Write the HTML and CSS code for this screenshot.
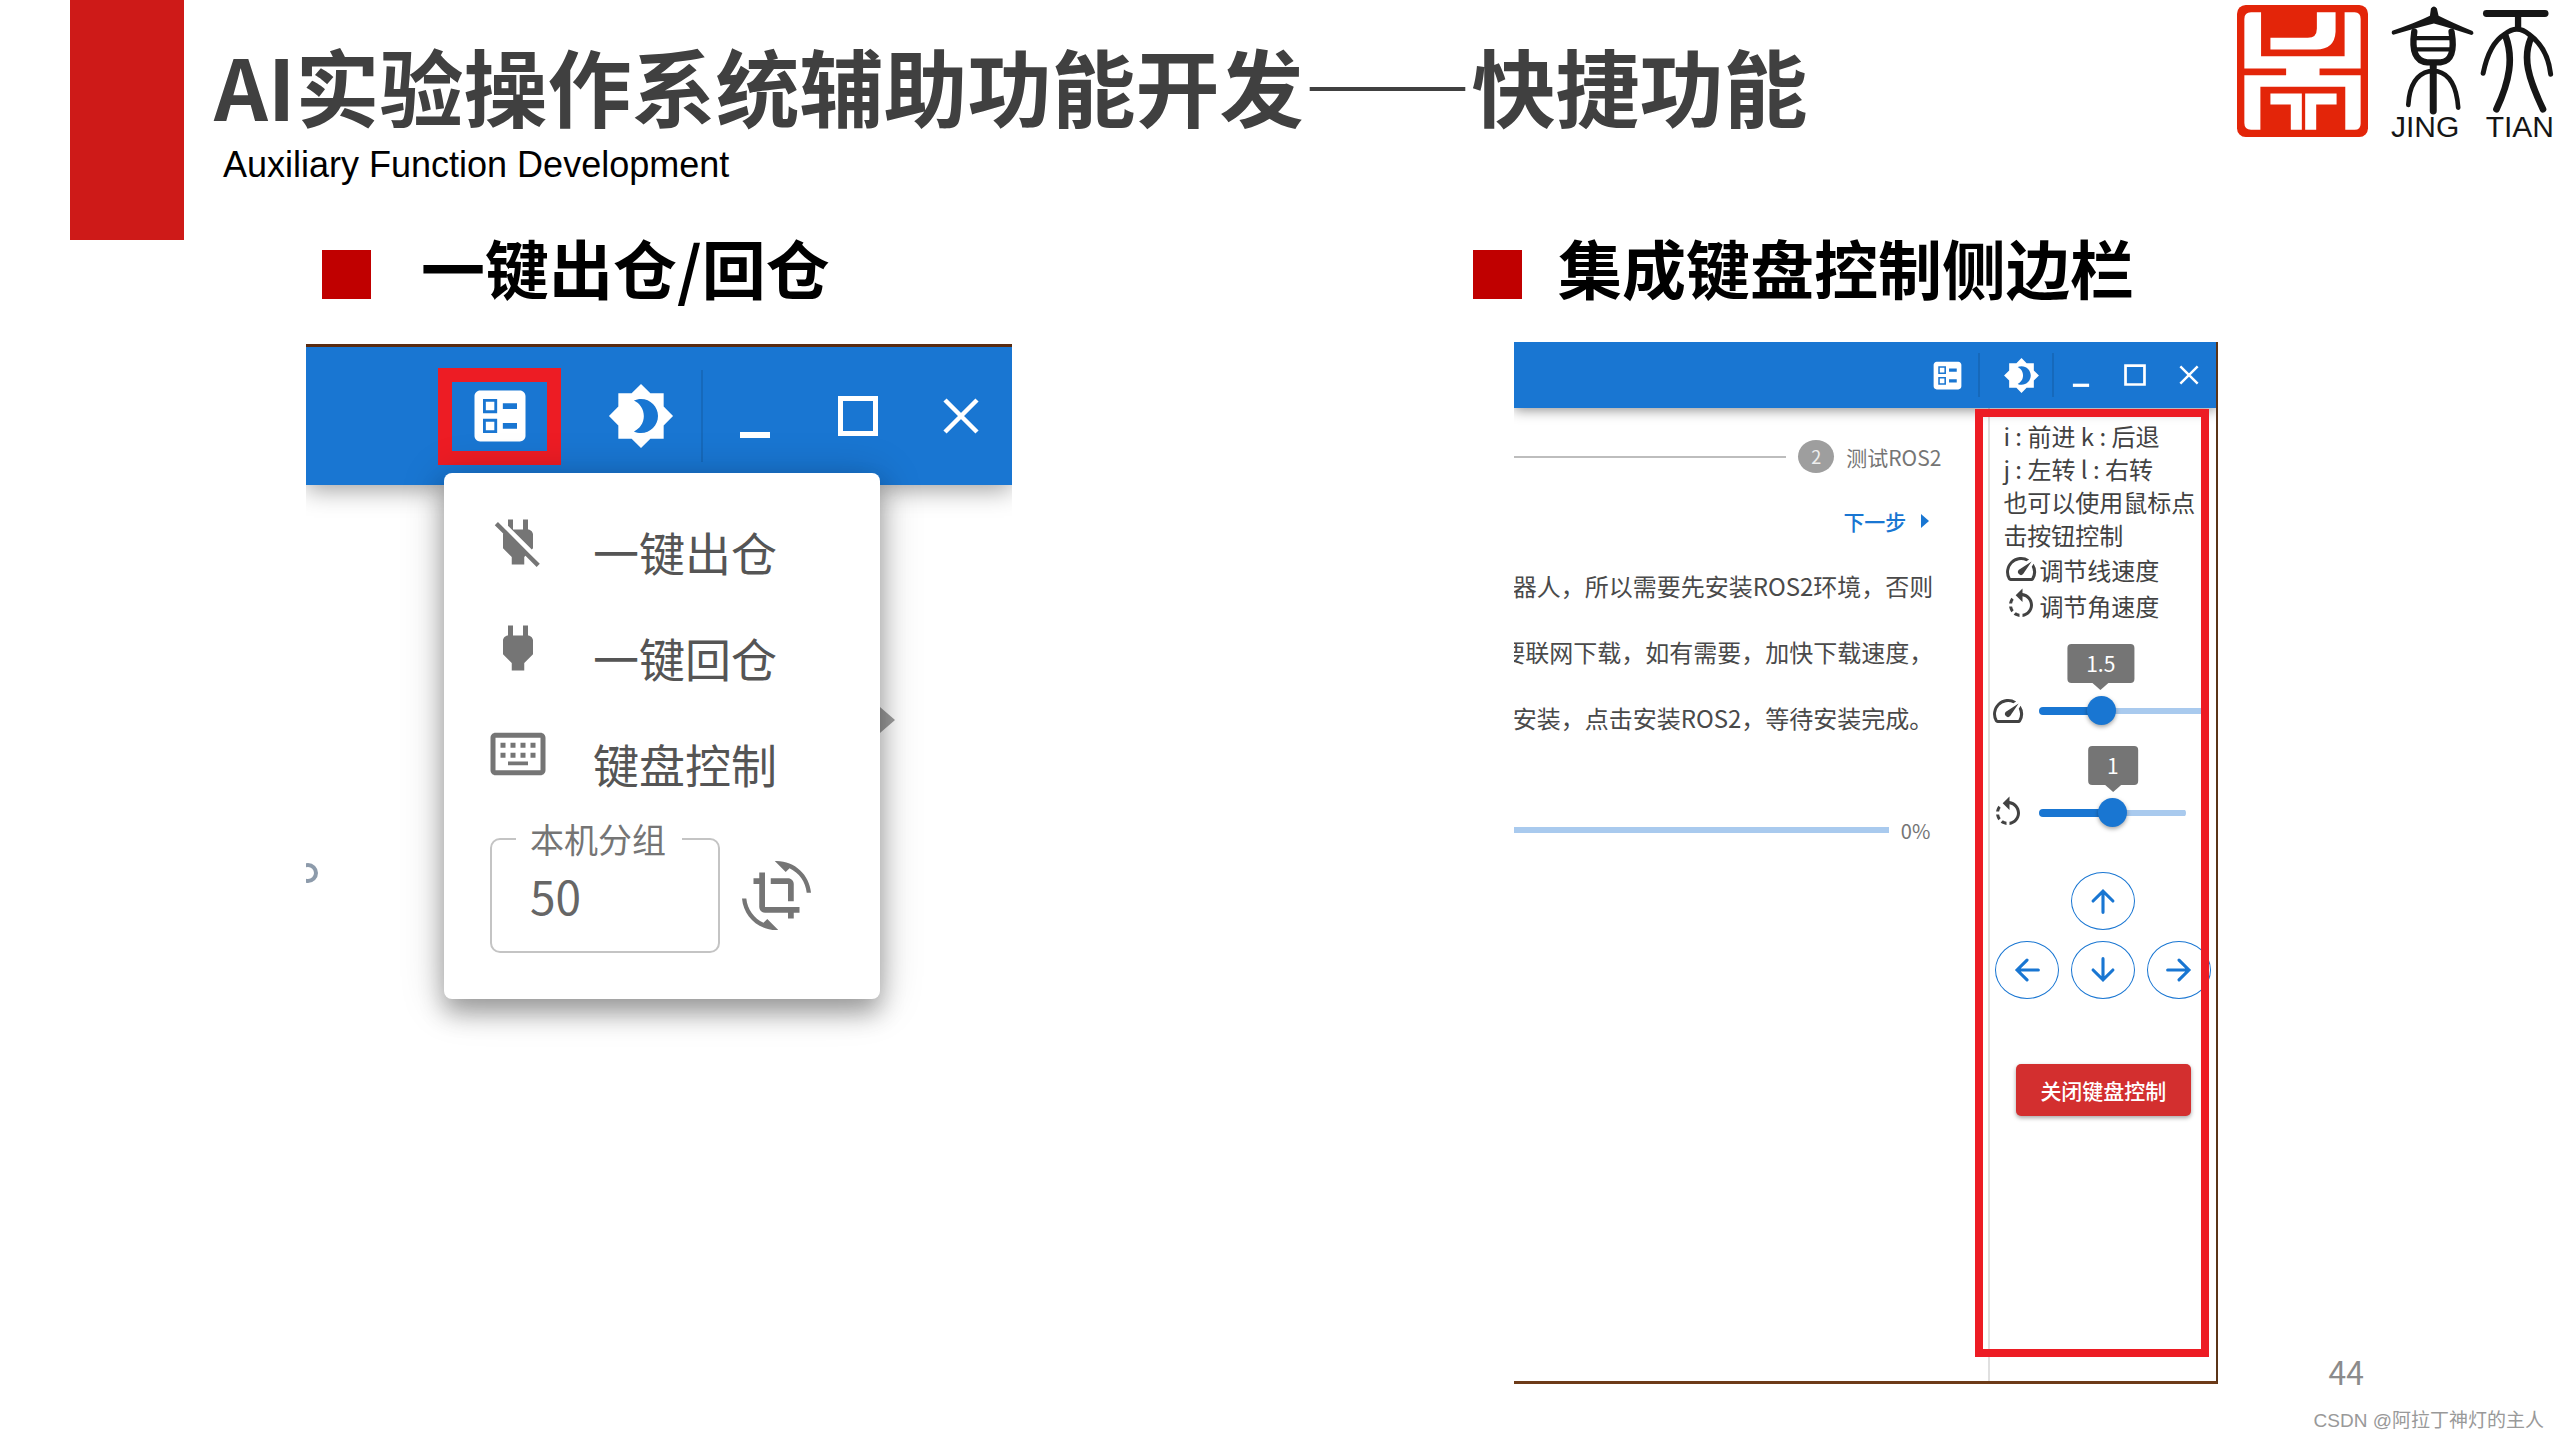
FILE: index.html
```html
<!DOCTYPE html>
<html lang="zh-CN">
<head>
<meta charset="UTF-8">
<title>AI实验操作系统辅助功能开发——快捷功能</title>
<meta name="viewport" content="width=device-width, initial-scale=1.0">
<link rel="stylesheet" href="styles.css">
</head>
<body>

<!-- icon sprite -->
<svg class="sprite" aria-hidden="true">
<symbol id="i-ballot" viewBox="0 0 24 24"><path fill-rule="evenodd" d="M13 9.5h5v-2h-5v2zm0 7h5v-2h-5v2zm6 4.5H5c-1.1 0-2-.9-2-2V5c0-1.1.9-2 2-2h14c1.1 0 2 .9 2 2v14c0 1.1-.9 2-2 2zM6 11h5V6H6v5zm1-4h3v3H7V7zM6 18h5v-5H6v5zm1-4h3v3H7v-3z"/></symbol>
<symbol id="i-theme" viewBox="0 0 24 24"><path d="M20 8.69V4h-4.69L12 .69 8.69 4H4v4.69L.69 12 4 15.31V20h4.69L12 23.31 15.31 20H20v-4.69L23.31 12 20 8.69zM12 18c-.89 0-1.74-.2-2.5-.55C11.56 16.5 13 14.42 13 12s-1.44-4.5-3.5-5.45C10.26 6.2 11.11 6 12 6c3.31 0 6 2.69 6 6s-2.69 6-6 6z"/></symbol>
<symbol id="i-min" viewBox="0 0 48 48"><path d="M9 40h30v6H9z"/></symbol>
<symbol id="i-max" viewBox="0 0 48 48"><path fill-rule="evenodd" d="M4 4h40v40H4zM9 9v30h30V9z"/></symbol>
<symbol id="i-close" viewBox="0 0 48 48"><path d="M8 8l32 32M40 8L8 40" fill="none" stroke="currentColor" stroke-width="4.5"/></symbol>
<symbol id="i-plug" viewBox="0 0 24 24"><path d="M16.01 7L16 3h-2v4h-4V3H8v4h-.01C7 6.99 6 7.99 6 8.99v5.49L9.5 18v3h5v-3l3.5-3.51v-5.5c0-1-1-2-1.99-1.99z"/></symbol>
<symbol id="i-plug-off" viewBox="0 0 24 24"><path d="M18 14.49V9c0-1-1.01-2.01-2-2V3h-2v4h-4V3H8v2.48l9.51 9.5.49-.49zm-1.76 1.77L7.2 7.2l-.01.01L3.98 4 2.71 5.25l3.36 3.36C6.04 8.74 6 8.87 6 9v5.48L9.5 18v3h5v-3l.48-.48L19.45 22l1.26-1.28-4.47-4.46z"/></symbol>
<symbol id="i-keyboard" viewBox="0 0 24 24"><path fill-rule="evenodd" d="M21 3.5H3c-1.1 0-2 .9-2 2v13c0 1.1.9 2 2 2h18c1.1 0 2-.9 2-2v-13c0-1.1-.9-2-2-2zm0 15H3v-13h18v13z"/><path d="M5 7.5h2v2H5zm4 0h2v2H9zm4 0h2v2h-2zm4 0h2v2h-2zM5 11.5h2v2H5zm4 0h2v2H9zm4 0h2v2h-2zm4 0h2v2h-2zM8 15h8v1.5H8z"/></symbol>
<symbol id="i-crop-rotate" viewBox="0 0 24 24"><path d="M7.47 21.49C4.2 19.94 1.86 16.76 1.5 13H0c.51 6.16 5.66 11 11.95 11 .23 0 .44-.02.66-.03L8.8 20.15l-1.33 1.34zM12.05 0c-.23 0-.44.02-.66.04l3.81 3.81 1.33-1.33C19.8 4.07 22.14 7.24 22.5 11H24c-.51-6.16-5.66-11-11.95-11zM16 14h2V8c0-1.11-.9-2-2-2h-6v2h6v6zm-8 2V4H6v2H4v2h2v8c0 1.1.89 2 2 2h8v2h2v-2h2v-2H8z"/></symbol>
<symbol id="i-speed" viewBox="0 0 24 24"><path d="M20.38 8.57l-1.23 1.85a8 8 0 0 1-.22 7.58H5.07A8 8 0 0 1 15.58 6.85l1.85-1.23A10 10 0 0 0 3.35 19a2 2 0 0 0 1.72 1h13.85a2 2 0 0 0 1.74-1 10 10 0 0 0-.27-10.44zM10.59 15.41a2 2 0 0 0 2.83 0l5.66-8.49-8.49 5.66a2 2 0 0 0 0 2.83z"/></symbol>
<symbol id="i-rotate" viewBox="0 0 24 24"><path d="M7.11 8.53L5.7 7.11C4.8 8.27 4.24 9.61 4.07 11h2.02c.14-.87.49-1.72 1.02-2.47zM6.09 13H4.07c.17 1.39.72 2.73 1.62 3.89l1.41-1.42c-.52-.75-.87-1.59-1.01-2.47zm1.01 5.32c1.16.9 2.51 1.44 3.9 1.61V17.9c-.87-.15-1.71-.49-2.46-1.03L7.1 18.32zM13 4.07V1L8.45 5.55 13 10V6.09c2.84.48 5 2.94 5 5.91s-2.16 5.43-5 5.91v2.02c3.95-.49 7-3.85 7-7.93s-3.05-7.44-7-7.93z"/></symbol>
<symbol id="i-arrow" viewBox="0 0 24 24"><path d="M12 20V5.5M5 12l7-7 7 7" fill="none" stroke="currentColor" stroke-width="2.2" stroke-linecap="round"/></symbol>
</svg>

<header class="slide-header">
<div class="accent"></div>
<div class="titles">
<h1>AI实验操作系统辅助功能开发——快捷功能</h1>
<p>Auxiliary Function Development</p>
</div>
<div class="logo">
<svg class="logo-mark" viewBox="113 15 392 395" aria-hidden="true">
<rect x="113" y="15" width="392" height="395" rx="26" fill="#e32509"/>
<g fill="#fff">
<path d="M155 37H185V168H435V37H465Q483 37 483 57V205H360V225H483V370Q483 388 465 388H437V260H183V388H155Q135 388 135 368V225H260V205H135V57Q135 37 155 37Z"/>
<path d="M352 37H408V95Q405 148 350 148H213V113H325Q352 113 352 85Z"/>
<path d="M213 280H307V388H274V313H213ZM317 280H411V313H350V388H317Z"/>
</g>
</svg>
<div class="logo-name">
<svg viewBox="573 12 490 330" aria-hidden="true">
<path fill="#161616" d="M577 89Q650 64 690 44L693 22Q702 10 711 22L716 44Q760 66 818 90Q825 100 815 102Q750 80 702 67Q650 80 580 101Q572 98 577 89Z"/>
<g fill="none" stroke="#161616" stroke-linecap="round">
<path stroke-width="19" d="M643 92Q630 180 682 184H722Q770 180 755 92"/>
<path stroke-width="13" d="M645 111H755M645 145H755"/>
<path stroke-width="21" d="M700 188V330"/>
<path stroke-width="14" d="M625 312Q630 224 688 211H712Q768 224 775 320"/>
<path stroke-width="21" d="M860 37H1036"/>
<path stroke-width="19" d="M955 42V76"/>
<path stroke-width="15" d="M850 217Q868 128 914 100Q952 68 988 100Q1044 140 1053 220"/>
<path stroke-width="20" d="M917 104C942 170 930 240 890 325M994 110C968 170 985 230 1030 325"/>
</g>
</svg>
<div class="logo-text"><span>JING</span> <span>TIAN</span></div>
</div>
</div>
</header>

<main class="columns">

<section class="column">
<h2>一键出仓/回仓</h2>
<div class="shot shot-menu">
<nav class="bar bar-lg">
<button class="marked" aria-label="快捷功能"><svg><use href="#i-ballot"/></svg></button>
<button class="theme" aria-label="主题"><svg><use href="#i-theme"/></svg></button>
<span class="rule"></span>
<button class="win" aria-label="最小化"><svg><use href="#i-min"/></svg></button>
<button class="win" aria-label="最大化"><svg><use href="#i-max"/></svg></button>
<button class="win" aria-label="关闭"><svg><use href="#i-close"/></svg></button>
</nav>
<span class="dot"></span>
<span class="more"></span>
<div class="menu">
<button class="menu-item"><svg><use href="#i-plug-off"/></svg>一键出仓</button>
<button class="menu-item"><svg><use href="#i-plug"/></svg>一键回仓</button>
<button class="menu-item"><svg><use href="#i-keyboard"/></svg>键盘控制</button>
<div class="group">
<fieldset>
<legend><label for="groupId">本机分组</label></legend>
<input id="groupId" type="text" value="50">
</fieldset>
<button aria-label="重置"><svg><use href="#i-crop-rotate"/></svg></button>
</div>
</div>
</div>
</section>

<section class="column column-right">
<h2>集成键盘控制侧边栏</h2>
<div class="shot shot-panel">
<nav class="bar bar-sm">
<button aria-label="快捷功能"><svg><use href="#i-ballot"/></svg></button>
<span class="rule"></span>
<button class="theme" aria-label="主题"><svg><use href="#i-theme"/></svg></button>
<span class="rule"></span>
<button class="win" aria-label="最小化"><svg><use href="#i-min"/></svg></button>
<button class="win" aria-label="最大化"><svg><use href="#i-max"/></svg></button>
<button class="win" aria-label="关闭"><svg><use href="#i-close"/></svg></button>
</nav>
<div class="panel-body">
<div class="guide">
<div class="step"><span class="line"></span><span class="num">2</span><span>测试ROS2</span></div>
<button class="next">下一步<span class="tri"></span></button>
<p>器人，所以需要先安装ROS2环境，否则</p>
<p>要联网下载，如有需要，加快下载速度，</p>
<p>安装，点击安装ROS2，等待安装完成。</p>
<div class="progress"><span class="track"></span><span>0%</span></div>
</div>
<aside>
<div class="help">
<div>i : 前进 k : 后退</div>
<div>j : 左转 l : 右转</div>
<div>也可以使用鼠标点</div>
<div>击按钮控制</div>
<div class="icon-line"><svg><use href="#i-speed"/></svg>调节线速度</div>
<div class="icon-line"><svg><use href="#i-rotate"/></svg>调节角速度</div>
</div>
<div class="slider">
<svg><use href="#i-speed"/></svg>
<div class="slider-box linear" style="--fill:37%">
<output for="linear">1.5</output>
<input id="linear" type="range" min="0" max="4.3" step="0.1" value="1.5" aria-label="线速度">
</div>
</div>
<div class="slider">
<svg><use href="#i-rotate"/></svg>
<div class="slider-box" style="--fill:50%">
<output for="angular">1</output>
<input id="angular" type="range" min="0" max="2" step="0.1" value="1" aria-label="角速度">
</div>
</div>
<div class="pad">
<button class="up" aria-label="前进"><svg><use href="#i-arrow"/></svg></button>
<button class="left" aria-label="左转"><svg><use href="#i-arrow"/></svg></button>
<button class="down" aria-label="后退"><svg><use href="#i-arrow"/></svg></button>
<button class="right" aria-label="右转"><svg><use href="#i-arrow"/></svg></button>
</div>
<button class="close-pad">关闭键盘控制</button>
</aside>
</div>
<div class="frame"></div>
</div>
</section>

</main>

<footer>
<div class="page-no">44</div>
<div class="credit">CSDN @阿拉丁神灯的主人</div>
</footer>

</body>
</html>
```

FILE: styles.css
```css
*{box-sizing:border-box}
body{margin:0;min-height:100vh;position:relative;background:#fff;color:#000;font-family:"Noto Sans CJK SC",sans-serif}
h1,h2,p{margin:0}
button{padding:0;border:none;background:none;font-family:inherit;color:inherit;cursor:pointer;display:flex;align-items:center;justify-content:center}
svg{display:block;fill:currentColor;flex:none}
.sprite{position:absolute;width:0;height:0}

/* header */
.slide-header{display:flex;align-items:flex-start;height:240px;padding:0 6px 0 70px}
.accent{width:114px;height:240px;background:#ce1a18}
.titles{padding:35px 0 0 30px}
h1{font-size:84px;line-height:100px;font-weight:700;color:#404040;white-space:nowrap}
.titles p{margin:6px 0 0 9px;font-family:"Liberation Sans",Arial,sans-serif;font-size:36px;line-height:48px}
.logo{display:flex;gap:23px;margin:5px 0 0 auto}
.logo-mark{width:131px;height:132px}
.logo-name{width:163px}
.logo-name svg{width:163px;height:110px}
.logo-text{display:flex;justify-content:space-between;font-family:"Liberation Sans",Arial,sans-serif;font-size:30px;line-height:24px;color:#161616}

/* two columns */
.columns{display:grid;grid-template-columns:1167fr 1087fr;padding-left:306px}
h2{display:flex;align-items:center;gap:50px;height:68px;margin-bottom:34px;padding:0 0 16px 16px;font-size:64px;line-height:52px;font-weight:700;white-space:nowrap}
h2::before{content:"";width:49px;height:49px;margin-top:16px;background:#c00000}
.column-right h2{padding-left:0;gap:36px}
.shot{position:relative;overflow:hidden}
.shot-menu{width:60.5%;height:730px;margin-top:36px;border-top:3px solid #5a2b10}
.shot-panel{width:64.8%;margin-left:41px;border-right:2px solid #5a3418;border-bottom:3px solid #6d3b18}

/* app bar */
.bar{position:relative;z-index:1;display:flex;justify-content:flex-end;align-items:center;background:#1976d2;color:#fff}
.bar .rule{width:2px;background:#1669bb}
.bar-lg{height:138px;box-shadow:0 4px 24px rgba(0,0,0,.4)}
.bar-lg button{width:120px;height:97px}
.bar-lg svg{width:68px;height:68px}
.bar-lg .marked{width:123px;border:14px solid #ed1c24;margin-right:20px}
.bar-lg .win{width:103px}
.bar-lg .win svg{width:48px;height:48px}
.bar-lg .rule{height:92px}
.bar-sm{height:66px;box-shadow:0 2px 12px rgba(0,0,0,.45)}
.bar-sm button{width:62px;height:50px}
.bar-sm svg{width:37px;height:37px}
.bar-sm .theme{margin-left:10px}
.bar-sm .win{width:54px}
.bar-sm .win svg{width:26px;height:26px}
.bar-sm .rule{height:44px}

/* dropdown menu */
.menu{position:absolute;z-index:2;top:126px;left:138px;width:436px;padding:28px 0 46px;background:#fff;border-radius:8px;color:#757575;box-shadow:0 14px 24px rgba(0,0,0,.3),0 4px 44px rgba(0,0,0,.22)}
.menu-item{width:100%;height:106px;padding:0 0 6px 44px;justify-content:flex-start;gap:45px;font-size:46px;color:#555}
.menu-item svg{width:60px;height:60px;margin-bottom:18px;color:#757575}
.group{display:flex;align-items:center;gap:22px;padding:0 0 0 46px}
fieldset{width:230px;height:134px;margin:0;padding:0 30px;border:2px solid #c4c4c4;border-radius:10px}
legend{margin-left:-6px;padding:0 16px 0 14px;font-size:34px;line-height:40px;white-space:nowrap}
fieldset input{width:100%;height:72px;padding:0 8px;border:none;outline:none;background:none;font-family:inherit;font-size:46px;color:#666}
.group button{margin-top:18px}
.group svg{width:69px;height:69px}
.dot{position:absolute;top:516px;left:-8px;width:20px;height:20px;border:4px solid #8d9bab;border-radius:50%}
.more{position:absolute;z-index:2;top:360px;left:574px;border:13px solid transparent;border-left:15px solid #9e9e9e;border-right:none}

/* install guide */
.panel-body{display:flex;align-items:stretch;color:#4a4a4a;font-size:24px}
.guide{flex:1;min-width:0;padding:32px 55px 0 0}
.guide p{display:flex;justify-content:flex-end;line-height:66px;white-space:nowrap}
.step{display:flex;align-items:center;gap:12px;height:33px;margin-right:-8px;font-size:21px;color:#757575}
.step .line{flex:1;height:2px;background:#bdbdbd}
.step .num{width:36px;height:33px;border-radius:50%;background:#9e9e9e;color:#eee;font-size:18px;line-height:33px;text-align:center}
.next{height:64px;margin:16px 4px 0 auto;gap:15px;font-size:21px;font-weight:500;color:#1976d2}
.tri{border:7px solid transparent;border-left:8px solid #1976d2;border-right:none}
.progress{display:flex;align-items:center;gap:12px;height:30px;margin-top:64px;padding-right:3px;font-size:20px;color:#757575}
.progress .track{flex:1;height:6px;background:#a9caee}

/* keyboard control sidebar */
aside{width:228px;padding:11px 0 265px;border-left:2px solid #e0e0e0}
.help{padding-left:13px;line-height:33px;color:#424242;white-space:nowrap}
.icon-line{display:flex;align-items:center;height:36px}
.icon-line svg{width:36px;height:36px}
.slider{display:flex;align-items:center;gap:13px;height:102px;color:#424242}
.help + .slider{margin-top:37px}
.slider svg{width:36px;height:36px}
.slider-box{position:relative;width:147px}
.slider-box.linear{width:166px}
.slider input{display:block;width:100%;height:30px;margin:0;background:none;-webkit-appearance:none;appearance:none}
.slider input::-webkit-slider-runnable-track{height:8px;border-radius:4px;background:linear-gradient(#1976d2,#1976d2) left/var(--fill) 8px no-repeat,linear-gradient(#a9caee,#a9caee) center/100% 6px no-repeat}
.slider input::-webkit-slider-thumb{-webkit-appearance:none;width:29px;height:29px;margin-top:-11px;border-radius:50%;background:#1976d2;box-shadow:0 2px 4px rgba(0,0,0,.35)}
output{position:absolute;bottom:43px;left:var(--fill);transform:translateX(-50%);padding:0 19px;border-radius:4px;background:#757575;color:#fff;font-size:21px;line-height:39px}
output::after{content:"";position:absolute;top:100%;left:50%;margin-left:-8px;border:8px solid transparent;border-top:7px solid #757575;border-bottom:none}
.pad{display:grid;grid-template-columns:repeat(3,64px);grid-auto-rows:58px;gap:11px 12px;justify-content:center;margin-top:8px}
.pad button{border:1px solid #1976d2;border-radius:50%;color:#1976d2}
.pad svg{width:34px;height:34px}
.pad .up{grid-column:2}
.pad .left{grid-column:1}
.pad .left svg{transform:rotate(-90deg)}
.pad .right svg{transform:rotate(90deg)}
.pad .down svg{transform:rotate(180deg)}
.close-pad{width:175px;height:52px;margin:65px auto 0;border-radius:5px;background:#d32f2f;color:#fff;font-size:21px;font-weight:500;box-shadow:0 2px 4px rgba(0,0,0,.35)}
.frame{position:absolute;z-index:2;top:67px;right:7px;bottom:24px;width:234px;border:8px solid #ed1c24;pointer-events:none}

/* page number and credit */
footer{position:absolute;right:16px;bottom:4px;text-align:right}
.page-no{margin-right:180px;font-size:32px;line-height:46px;color:#8b8b8b}
.credit{font-family:"Liberation Sans","Noto Sans CJK SC",sans-serif;font-size:19px;line-height:30px;margin-top:12px;color:#999}
```
